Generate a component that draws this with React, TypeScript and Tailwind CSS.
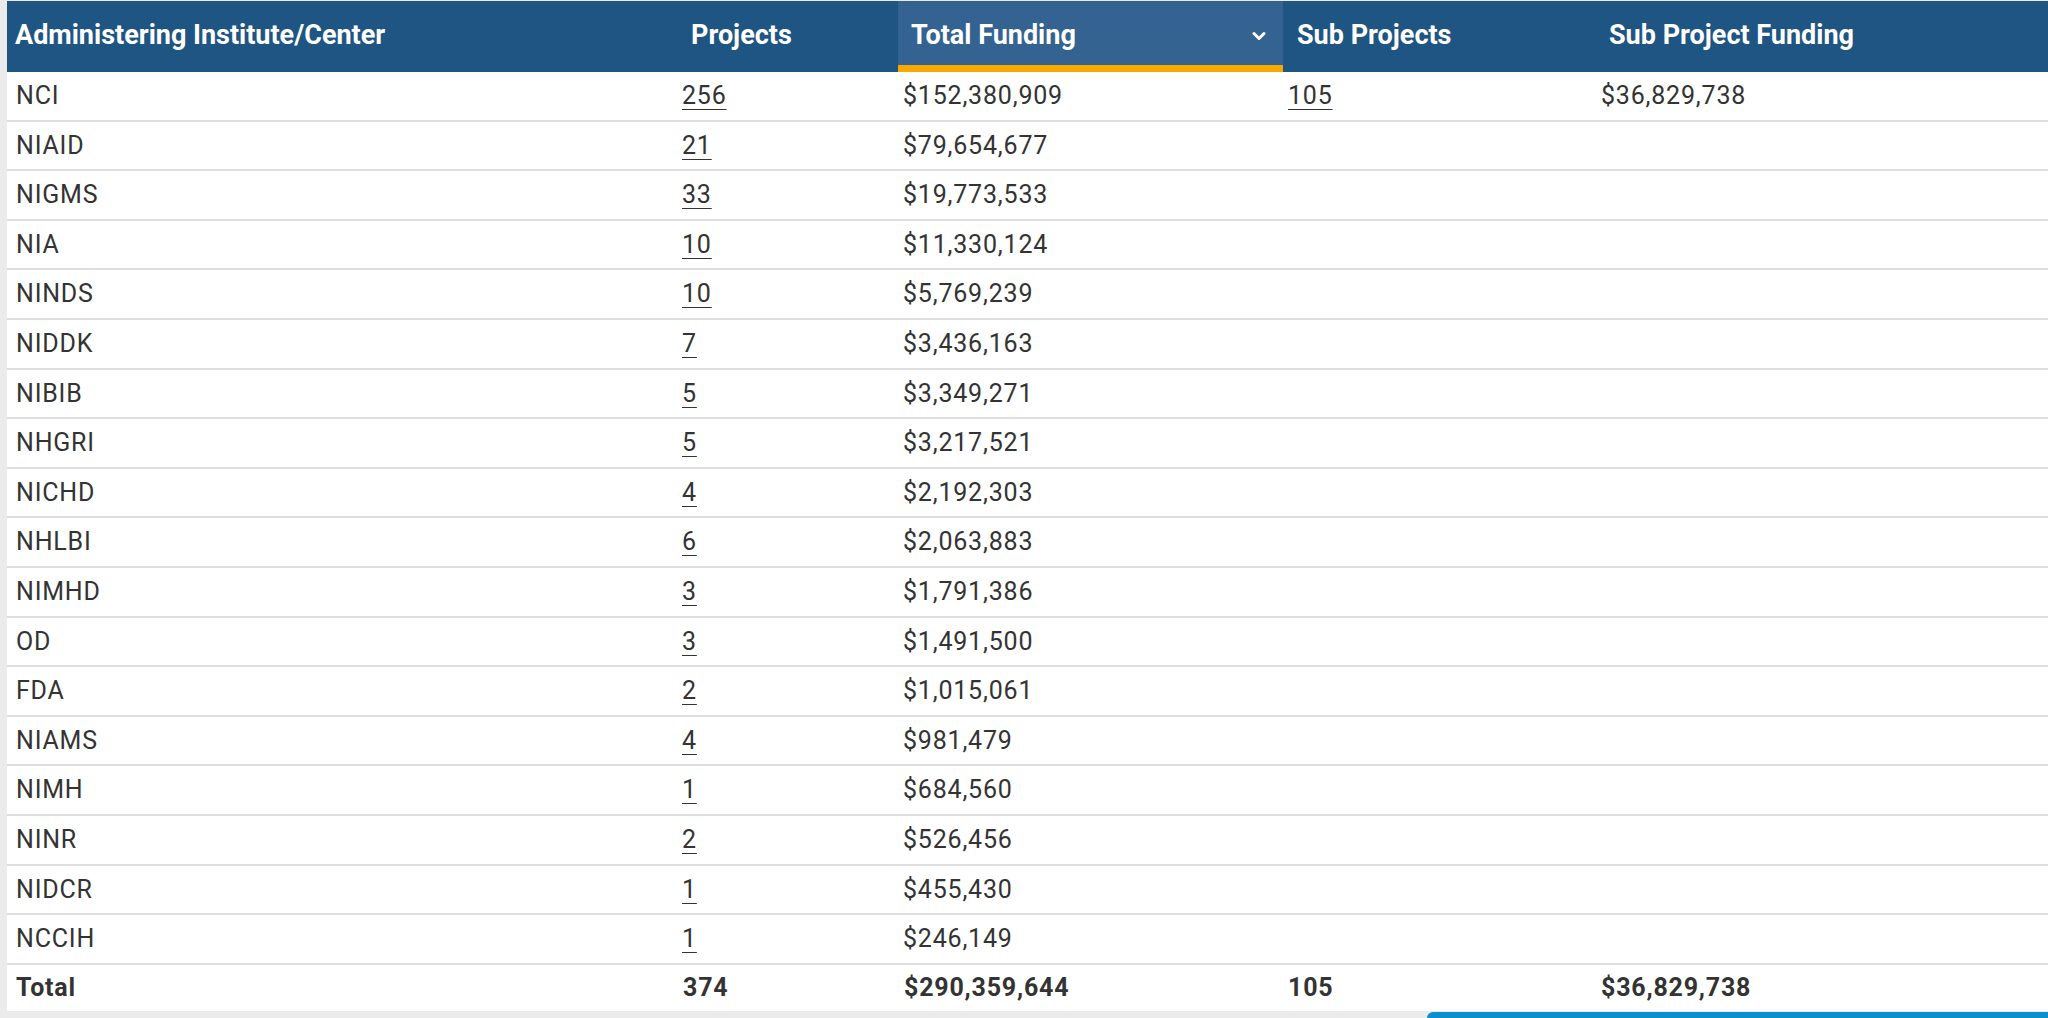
import React from 'react';

interface Row {
  ic: string;
  projects: number;
  funding: string;
  subProjects?: number;
  subFunding?: string;
}

const rows: Row[] = [
  { ic: 'NCI', projects: 256, funding: '$152,380,909', subProjects: 105, subFunding: '$36,829,738' },
  { ic: 'NIAID', projects: 21, funding: '$79,654,677' },
  { ic: 'NIGMS', projects: 33, funding: '$19,773,533' },
  { ic: 'NIA', projects: 10, funding: '$11,330,124' },
  { ic: 'NINDS', projects: 10, funding: '$5,769,239' },
  { ic: 'NIDDK', projects: 7, funding: '$3,436,163' },
  { ic: 'NIBIB', projects: 5, funding: '$3,349,271' },
  { ic: 'NHGRI', projects: 5, funding: '$3,217,521' },
  { ic: 'NICHD', projects: 4, funding: '$2,192,303' },
  { ic: 'NHLBI', projects: 6, funding: '$2,063,883' },
  { ic: 'NIMHD', projects: 3, funding: '$1,791,386' },
  { ic: 'OD', projects: 3, funding: '$1,491,500' },
  { ic: 'FDA', projects: 2, funding: '$1,015,061' },
  { ic: 'NIAMS', projects: 4, funding: '$981,479' },
  { ic: 'NIMH', projects: 1, funding: '$684,560' },
  { ic: 'NINR', projects: 2, funding: '$526,456' },
  { ic: 'NIDCR', projects: 1, funding: '$455,430' },
  { ic: 'NCCIH', projects: 1, funding: '$246,149' },
];

const cols = 'grid grid-cols-[671px_220px_385px_314px_451px]';

export default function App() {
  return (
    <div className="relative h-[1018px] w-full overflow-hidden bg-[#ebebeb] pl-[7px] pt-[1px] font-['Roboto',sans-serif] text-[#333333]">
      <div className="bg-white">
        {/* header */}
        <div className={`${cols} h-[71px] bg-[#1f5582] text-[27px] font-bold text-white`}>
          <div className="flex items-center pl-[8px] pb-[2px]">Administering Institute/Center</div>
          <div className="flex items-center pl-[13px] pb-[2px]">Projects</div>
          <div className="flex items-center justify-between border-b-[7px] border-[#f9a800] bg-[#346291] pl-[13px] pr-[17px] pt-[5px]">
            <span>Total Funding</span>
            <svg width="14" height="10" viewBox="0 0 14 10" fill="none">
              <path d="M2 2.5l5 5 5-5" stroke="white" strokeWidth="3" strokeLinecap="round" strokeLinejoin="round" />
            </svg>
          </div>
          <div className="flex items-center pl-[14px] pb-[2px]">Sub Projects</div>
          <div className="flex items-center pl-[12px] pb-[2px]">Sub Project Funding</div>
        </div>

        {rows.map((r) => (
          <div key={r.ic} className={`${cols} h-[49.6px] border-b-2 border-[#dedede] text-[25px] tracking-[0.8px]`}>
            <div className="flex items-center pl-[9px]">{r.ic}</div>
            <div className="flex items-center pl-[4px]">
              <a href="#" className="underline decoration-1 underline-offset-[5px]">{r.projects}</a>
            </div>
            <div className="flex items-center pl-[5px]">{r.funding}</div>
            <div className="flex items-center pl-[5px]">
              {r.subProjects !== undefined && (
                <a href="#" className="underline decoration-1 underline-offset-[5px]">{r.subProjects}</a>
              )}
            </div>
            <div className="flex items-center pl-[4px]">{r.subFunding}</div>
          </div>
        ))}

        <div className={`${cols} h-[46.5px] text-[25px] font-bold tracking-[0.8px]`}>
          <div className="flex items-center pl-[9px]">Total</div>
          <div className="flex items-center pl-[5px]">374</div>
          <div className="flex items-center pl-[6px]">$290,359,644</div>
          <div className="flex items-center pl-[5px]">105</div>
          <div className="flex items-center pl-[4px]">$36,829,738</div>
        </div>
      </div>

      <div className="absolute bottom-0 left-[1427px] right-0 h-[6px] rounded-tl-[10px] bg-[#0a8fd0]" />
    </div>
  );
}
